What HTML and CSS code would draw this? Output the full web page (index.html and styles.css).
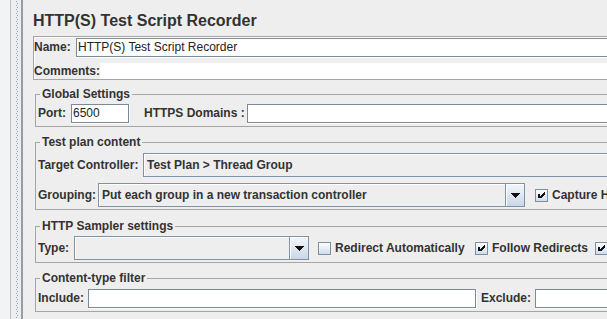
FILE: index.html
```html
<!DOCTYPE html>
<html>
<head>
<meta charset="utf-8">
<title>HTTP(S) Test Script Recorder</title>
<link rel="stylesheet" href="styles.css">
</head>
<body>
<div class="app">
  <div class="divider">
    <div class="tree-edge"></div>
    <div class="gap-a"></div>
    <div class="bumps"></div>
    <div class="gap-b"></div>
    <div class="divider-edge"></div>
  </div>
  <main class="panel">
    <h1 class="title">HTTP(S) Test Script Recorder</h1>

    <div class="name-box">
      <div class="row name-row">
        <span class="lbl w-name">Name:</span>
        <div class="field grow">HTTP(S) Test Script Recorder</div>
      </div>
      <div class="row comments-row">
        <span class="lbl w-comments">Comments:</span>
        <div class="textarea"></div>
      </div>
    </div>

    <fieldset class="group g-global">
      <legend>Global Settings</legend>
      <div class="fs-body pt2">
        <div class="row field-row">
          <span class="lbl w-port">Port:</span>
          <div class="field w-portfield">6500</div>
          <span class="lbl w-domains">HTTPS Domains :</span>
          <div class="field grow"></div>
        </div>
      </div>
    </fieldset>

    <fieldset class="group g-plan">
      <legend>Test plan content</legend>
      <div class="fs-body pt3">
        <div class="row combo-row">
          <span class="lbl w-target">Target Controller:</span>
          <div class="combo grow"><span class="combo-text">Test Plan &gt; Thread Group</span></div>
        </div>
        <div class="row combo-row gap6">
          <span class="lbl w-grouping">Grouping:</span>
          <div class="combo w-groupcombo">
            <span class="combo-text">Put each group in a new transaction controller</span>
            <span class="combo-btn"><svg width="9" height="5" viewBox="0 0 9 5"><polygon points="0,0 9,0 5,5 4,5" fill="#111"/></svg></span>
          </div>
          <span class="check on ml10"><svg width="13" height="13" viewBox="0 0 13 13"><polygon points="3,5 5,5 5,7 9,3 10,3 10,5 6,9 3,9" fill="#111"/></svg></span>
          <span class="lbl check-lbl">Capture HTTP Headers</span>
        </div>
      </div>
    </fieldset>

    <fieldset class="group g-sampler">
      <legend>HTTP Sampler settings</legend>
      <div class="fs-body pt2">
        <div class="row combo-row">
          <span class="lbl w-type">Type:</span>
          <div class="combo w-typecombo">
            <span class="combo-text"></span>
            <span class="combo-btn"><svg width="9" height="5" viewBox="0 0 9 5"><polygon points="0,0 9,0 5,5 4,5" fill="#111"/></svg></span>
          </div>
          <span class="check ml9"></span>
          <span class="lbl check-lbl w-redirect">Redirect Automatically</span>
          <span class="check on"><svg width="13" height="13" viewBox="0 0 13 13"><polygon points="3,5 5,5 5,7 9,3 10,3 10,5 6,9 3,9" fill="#111"/></svg></span>
          <span class="lbl check-lbl w-follow">Follow Redirects</span>
          <span class="check on"><svg width="13" height="13" viewBox="0 0 13 13"><polygon points="3,5 5,5 5,7 9,3 10,3 10,5 6,9 3,9" fill="#111"/></svg></span>
          <span class="lbl check-lbl">Use KeepAlive</span>
        </div>
      </div>
    </fieldset>

    <fieldset class="group g-content">
      <legend>Content-type filter</legend>
      <div class="fs-body pt3">
        <div class="row field-row">
          <span class="lbl w-include">Include:</span>
          <div class="field w-includefield"></div>
          <span class="lbl w-exclude">Exclude:</span>
          <div class="field grow"></div>
        </div>
      </div>
    </fieldset>
  </main>
</div>
</body>
</html>
```

FILE: styles.css
```css
* { box-sizing: border-box; }

html, body {
  margin: 0;
  height: 100%;
  overflow: hidden;
  background: #eeeeee;
}

body {
  font-family: "Liberation Sans", Arial, sans-serif;
  font-size: 12px;
  color: #333333;
}

.app {
  display: flex;
  height: 319px;
}

/* left split-pane divider */
.divider {
  display: flex;
  flex: none;
  height: 100%;
}
.tree-edge {
  width: 11px;
  background: #f3f3f3;
  border-right: 1px solid #b8c2cc;
}
.gap-a { width: 5px; }
.gap-b { width: 3px; }
.bumps {
  width: 2px;
  background-image:
    linear-gradient(to bottom, #8fa1b5 0 1px, transparent 1px 4px),
    linear-gradient(to bottom, #8fa1b5 0 1px, transparent 1px 4px);
  background-size: 1px 4px, 1px 4px;
  background-repeat: repeat-y, repeat-y;
  background-position: 0 1px, 1px 3px;
}
.divider-edge {
  width: 2px;
  background: #959ca5;
}

/* main panel */
.panel {
  flex: none;
  width: 700px;
  padding-left: 10px;
}

.title {
  margin: 11px 0 5px 0;
  font-size: 16px;
  line-height: 20px;
  font-weight: bold;
  color: #333333;
  white-space: nowrap;
}

.row {
  display: flex;
  align-items: center;
  white-space: nowrap;
}

.lbl {
  flex: none;
  font-weight: bold;
  line-height: 16px;
  white-space: nowrap;
}

.grow { flex: 1 1 auto; min-width: 0; }

/* name / comments box */
.name-box {
  border: 1px solid #a5a5a5;
  box-shadow: inset 1px 1px 0 #ffffff;
  padding-top: 1px;
}
.name-row { height: 20px; align-items: flex-start; }
.comments-row { margin-top: 5px; height: 16px; align-items: stretch; }
.w-name { width: 42px; line-height: 19px; }
.w-comments { width: 66px; line-height: 17px; }

.textarea {
  flex: 1 1 auto;
  background: #ffffff;
}

/* text fields */
.field {
  height: 19px;
  background: #ffffff;
  border: 1px solid #7a8a99;
  box-shadow: 0 1px 0 #ffffff, 1px 0 0 #ffffff;
  padding-left: 1px;
  line-height: 17px;
  font-size: 12px;
  color: #222222;
  overflow: hidden;
  white-space: nowrap;
}

/* titled groups */
.group {
  margin: 0 0 0 2px;
  padding: 0;
  min-width: 0;
  border: 1px solid #a5a5a5;
}
.group legend {
  margin-left: 4px;
  padding: 0 2px;
  font-weight: bold;
  font-size: 12px;
  line-height: 15px;
  color: #333333;
}
.g-global { margin-top: 7px; }
.g-plan { margin-top: 8px; }
.g-sampler { margin-top: 9px; }
.g-content { margin-top: 8px; }

.fs-body {
  padding: 0 0 2px 2px;
}
.pt2 { padding-top: 2px; }
.pt3 { padding-top: 3px; }

.field-row { height: 20px; align-items: flex-start; }
.field-row .lbl { line-height: 19px; }

.w-port { width: 33px; }
.w-portfield { width: 58px; flex: none; }
.w-domains { width: 103px; margin-left: 15px; }

.w-include { width: 50px; }
.w-includefield { width: 388px; flex: none; }
.w-exclude { width: 54px; margin-left: 5px; }

/* combo boxes */
.combo-row { height: 24px; }
.gap6 { margin-top: 6px; }

.w-target { width: 105px; }
.w-grouping { width: 60px; }
.w-type { width: 36px; }

.combo {
  display: flex;
  height: 24px;
  border: 1px solid #7f92a6;
  background: #eeeeee;
  box-shadow: inset 1px 1px 0 #ffffff;
  flex-shrink: 0;
}
.combo.grow { flex: 1 1 auto; }
.combo-text {
  flex: 1 1 auto;
  padding-left: 3px;
  font-weight: bold;
  line-height: 22px;
  overflow: hidden;
  white-space: nowrap;
}
.combo-btn {
  flex: none;
  width: 19px;
  display: flex;
  align-items: center;
  justify-content: center;
  border-left: 1px solid #7f92a6;
  background: linear-gradient(to bottom, #f2f6fb 0%, #dfe8f2 50%, #c8d7e7 100%);
  box-shadow: inset 1px 1px 0 #ffffff;
}
.combo-btn svg { display: block; shape-rendering: crispEdges; margin-top: 1px; }

.w-groupcombo { width: 427px; }
.w-typecombo { width: 235px; }

/* check boxes */
.check {
  flex: none;
  width: 13px;
  height: 13px;
  border: 1px solid #7f8fa0;
  background: linear-gradient(to bottom, #fbfdff 0%, #e6eef6 50%, #cfdcea 100%);
  position: relative;
}
.check svg {
  display: block;
  shape-rendering: crispEdges;
  margin: -1px 0 0 -1px;
}
.ml10 { margin-left: 10px; }
.ml9 { margin-left: 9px; }

.check-lbl { margin-left: 4px; }
.w-redirect { width: 140px; }
.w-follow { width: 103px; }
```
